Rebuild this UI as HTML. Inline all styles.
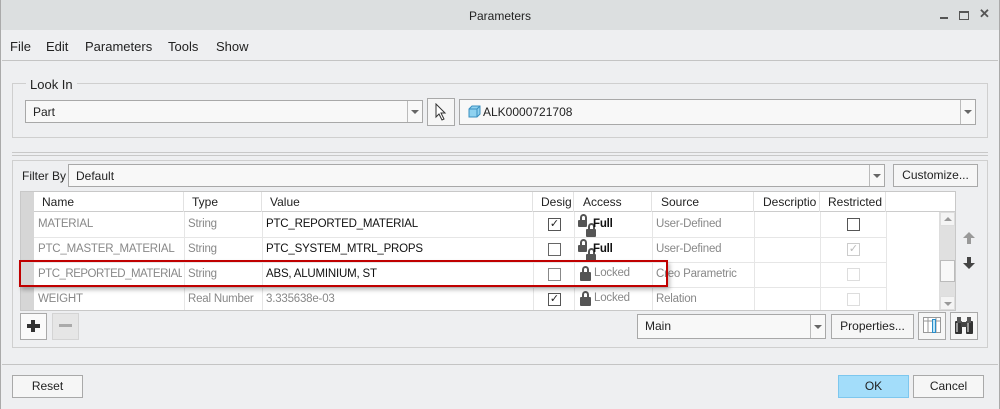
<!DOCTYPE html>
<html><head><meta charset="utf-8"><style>
*{box-sizing:border-box;margin:0;padding:0}
body{width:1000px;height:409px;background:#eeeff1;font-family:"Liberation Sans",sans-serif;font-size:12px;color:#222;position:relative;overflow:hidden}
.a{position:absolute}
.box{position:absolute;background:#f8f8f8;border:1px solid #a8a8a8}
.btn{position:absolute;background:#f6f6f6;border:1px solid #a9a9a9;text-align:center;line-height:20px}
.arr{position:absolute;width:0;height:0;border-left:4px solid transparent;border-right:4px solid transparent;border-top:4px solid #666}
.cell{position:absolute;white-space:nowrap;overflow:hidden;line-height:24px;padding-left:4px;border-right:1px solid #e2e2e2}
.t{position:absolute;white-space:nowrap;overflow:hidden;font-size:11.5px;letter-spacing:-0.2px}
.cb{position:absolute;width:13px;height:13px;border:1px solid #555;background:#fff}
.lock{position:absolute;width:11px;height:9px;background:#555;border-radius:1px}
.lock:before{content:"";position:absolute;left:2px;top:-6px;width:7px;height:7px;border:2px solid #555;border-bottom:none;border-radius:4px 4px 0 0;box-sizing:border-box}
</style></head><body>
<div class="a" style="left:0;top:0;width:1000px;height:30px;background:#dcdfe0"></div>
<div class="a" style="left:0;top:9px;width:1000px;text-align:center;font-size:12px">Parameters</div>
<div class="a" style="left:940px;top:17px;width:8px;height:2px;background:#555"></div>
<div class="a" style="left:959px;top:11px;width:10px;height:9px;border:1px solid #555;border-top-width:2px"></div>
<div class="a" style="left:979px;top:6px;font-size:13px;color:#555;font-weight:bold">✕</div>
<div class="a" style="left:10px;top:39px;font-size:13px">File</div>
<div class="a" style="left:46px;top:39px;font-size:13px">Edit</div>
<div class="a" style="left:85px;top:39px;font-size:13px">Parameters</div>
<div class="a" style="left:168px;top:39px;font-size:13px">Tools</div>
<div class="a" style="left:216px;top:39px;font-size:13px">Show</div>
<div class="a" style="left:2px;top:60px;width:996px;height:1px;background:#c4c4c4"></div>

<div class="a" style="left:12px;top:83px;width:976px;height:55px;border:1px solid #cfcfcf"></div>
<div class="a" style="left:26px;top:77px;padding:0 4px;background:#eeeff1;font-size:13px">Look In</div>
<div class="box" style="left:25px;top:100px;width:398px;height:23px"></div>
<div class="a" style="left:33px;top:105px">Part</div>
<div class="a" style="left:407px;top:101px;width:1px;height:21px;background:#bbb"></div>
<div class="arr" style="left:411px;top:110px"></div>
<div class="btn" style="left:427px;top:98px;width:28px;height:28px"></div>
<svg class="a" style="left:435px;top:103px" width="12" height="18"><path d="M1 1 L1 14 L4 11 L7 17 L9 16 L6 10 L10 10 Z" fill="#fff" stroke="#333"/></svg>
<div class="box" style="left:459px;top:99px;width:517px;height:26px"></div>
<svg class="a" style="left:468px;top:105px" width="13" height="13"><path d="M1 4 L4 1 L12 1 L12 9 L9 12 L1 12 Z" fill="#8fd2f0" stroke="#3a8fc0"/><path d="M1 4 L9 4 L9 12 M9 4 L12 1" fill="none" stroke="#3a8fc0"/></svg>
<div class="a" style="left:483px;top:105px">ALK0000721708</div>
<div class="a" style="left:960px;top:100px;width:1px;height:24px;background:#bbb"></div>
<div class="arr" style="left:964px;top:110px"></div>

<div class="a" style="left:12px;top:152px;width:976px;height:4px;border-top:1px solid #c8c8c8;border-bottom:1px solid #c8c8c8"></div>
<div class="a" style="left:12px;top:160px;width:976px;height:188px;border:1px solid #cfcfcf"></div>
<div class="a" style="left:22px;top:169px">Filter By</div>
<div class="box" style="left:68px;top:164px;width:817px;height:23px"></div>
<div class="a" style="left:76px;top:169px">Default</div>
<div class="a" style="left:869px;top:165px;width:1px;height:21px;background:#bbb"></div>
<div class="arr" style="left:873px;top:174px"></div>
<div class="btn" style="left:893px;top:164px;width:85px;height:23px;font-size:12px">Customize...</div>

<div class="a" style="left:20px;top:191px;width:936px;height:120px;background:#fff;border:1px solid #c8c8c8"></div>
<div class="a" style="left:21px;top:192px;width:13px;height:118px;background:#d6d6d6"></div>
<div class="a" style="left:34px;top:192px;width:921px;height:20px;background:#fff;border-bottom:1px solid #ccc"></div>
<div style="position:absolute;left:0;top:192px;height:20px;line-height:20px">
<div class="cell" style="left:34px;width:150px;line-height:20px;padding-left:8px">Name</div>
<div class="cell" style="left:184px;width:78px;line-height:20px;padding-left:8px">Type</div>
<div class="cell" style="left:262px;width:271px;line-height:20px;padding-left:8px">Value</div>
<div class="cell" style="left:533px;width:41px;line-height:20px;padding-left:8px">Desig</div>
<div class="cell" style="left:574px;width:78px;line-height:20px;padding-left:9px">Access</div>
<div class="cell" style="left:652px;width:102px;line-height:20px;padding-left:9px">Source</div>
<div class="cell" style="left:754px;width:66px;line-height:20px;padding-left:9px">Descriptio</div>
<div class="cell" style="left:820px;width:66px;line-height:20px;padding-left:8px">Restricted</div>
</div>
<div class="a" style="left:34px;top:237px;width:852px;height:1px;background:#e6e6e6"></div>
<div class="a" style="left:34px;top:262px;width:852px;height:1px;background:#e6e6e6"></div>
<div class="a" style="left:34px;top:287px;width:852px;height:1px;background:#e6e6e6"></div>
<div class="a" style="left:184px;top:212px;width:1px;height:98px;background:#e6e6e6"></div>
<div class="a" style="left:262px;top:212px;width:1px;height:98px;background:#e6e6e6"></div>
<div class="a" style="left:533px;top:212px;width:1px;height:98px;background:#e6e6e6"></div>
<div class="a" style="left:574px;top:212px;width:1px;height:98px;background:#e6e6e6"></div>
<div class="a" style="left:652px;top:212px;width:1px;height:98px;background:#e6e6e6"></div>
<div class="a" style="left:754px;top:212px;width:1px;height:98px;background:#e6e6e6"></div>
<div class="a" style="left:820px;top:212px;width:1px;height:98px;background:#e6e6e6"></div>
<div class="a" style="left:886px;top:212px;width:1px;height:98px;background:#e6e6e6"></div>

<div class="t" style="left:38px;top:218px;color:#888;width:144px">MATERIAL</div>
<div class="t" style="left:188px;top:218px;color:#888">String</div>
<div class="t" style="left:266px;top:218px;color:#111">PTC_REPORTED_MATERIAL</div>
<div class="t" style="left:38px;top:243px;color:#888;width:144px">PTC_MASTER_MATERIAL</div>
<div class="t" style="left:188px;top:243px;color:#888">String</div>
<div class="t" style="left:266px;top:243px;color:#111">PTC_SYSTEM_MTRL_PROPS</div>
<div class="t" style="left:38px;top:268px;color:#888;width:144px;letter-spacing:-0.5px">PTC_REPORTED_MATERIAL</div>
<div class="t" style="left:188px;top:268px;color:#888">String</div>
<div class="t" style="left:266px;top:268px;color:#111">ABS, ALUMINIUM, ST</div>
<div class="t" style="left:38px;top:293px;color:#888">WEIGHT</div>
<div class="t" style="left:188px;top:293px;color:#888">Real Number</div>
<div class="t" style="left:266px;top:293px;color:#888">3.335638e-03</div>

<div class="cb" style="left:548px;top:218px;font-size:11px;line-height:11px;text-align:center">✓</div>
<div class="cb" style="left:548px;top:243px;border-color:#666"></div>
<div class="cb" style="left:548px;top:268px;border-color:#888"></div>
<div class="cb" style="left:548px;top:293px;font-size:11px;line-height:11px;text-align:center">✓</div>

<div class="lock" style="left:578px;top:220px;width:9px;height:7px"></div>
<div class="lock" style="left:586px;top:229px;width:10px;height:8px"></div>
<div class="t" style="left:593px;top:218px;color:#111;font-weight:bold">Full</div>
<div class="lock" style="left:578px;top:245px;width:9px;height:7px"></div>
<div class="lock" style="left:586px;top:254px;width:10px;height:8px"></div>
<div class="t" style="left:593px;top:243px;color:#111;font-weight:bold">Full</div>
<div class="lock" style="left:580px;top:272px"></div>
<div class="t" style="left:594px;top:267px;color:#888">Locked</div>
<div class="lock" style="left:580px;top:297px"></div>
<div class="t" style="left:594px;top:292px;color:#888">Locked</div>

<div class="t" style="left:656px;top:218px;color:#888">User-Defined</div>
<div class="t" style="left:656px;top:243px;color:#888">User-Defined</div>
<div class="t" style="left:656px;top:268px;color:#888">Creo Parametric</div>
<div class="t" style="left:656px;top:293px;color:#888">Relation</div>

<div class="cb" style="left:847px;top:218px;border-color:#555"></div>
<div class="cb" style="left:847px;top:243px;border-color:#ccc;color:#bbb;font-size:11px;line-height:11px;text-align:center">✓</div>
<div class="cb" style="left:847px;top:268px;border-color:#ddd"></div>
<div class="cb" style="left:847px;top:293px;border-color:#ddd"></div>

<div class="a" style="left:939px;top:212px;width:16px;height:98px;background:#e0e0e0;border-left:1px solid #ddd"></div>
<div class="a" style="left:940px;top:212px;width:15px;height:14px;background:#f4f4f4;border:1px solid #ddd"></div>
<div class="a" style="left:944px;top:217px;border-left:4px solid transparent;border-right:4px solid transparent;border-bottom:4px solid #999"></div>
<div class="a" style="left:940px;top:260px;width:15px;height:22px;background:#f8f8f8;border:1px solid #bbb"></div>
<div class="a" style="left:940px;top:296px;width:15px;height:14px;background:#f4f4f4;border:1px solid #ddd"></div>
<div class="a" style="left:944px;top:302px;border-left:4px solid transparent;border-right:4px solid transparent;border-top:4px solid #999"></div>

<div class="a" style="left:19px;top:260px;width:649px;height:27px;border:2px solid #c00000;box-shadow:2px 3px 4px rgba(0,0,0,0.25)"></div>

<svg class="a" style="left:962px;top:231px" width="14" height="14"><path d="M7 1 L13 7 L9 7 L9 13 L5 13 L5 7 L1 7 Z" fill="#999"/></svg>
<svg class="a" style="left:962px;top:256px" width="14" height="14"><path d="M5 1 L9 1 L9 7 L13 7 L7 13 L1 7 L5 7 Z" fill="#444"/></svg>

<div class="btn" style="left:20px;top:313px;width:27px;height:27px;background:#fafafa"></div>
<div class="a" style="left:27px;top:324px;width:13px;height:4px;background:#333"></div>
<div class="a" style="left:31px;top:320px;width:4px;height:12px;background:#333"></div>
<div class="a" style="left:52px;top:313px;width:27px;height:27px;background:#e6e6e6;border:1px solid #d4d4d4"></div>
<div class="a" style="left:59px;top:324px;width:13px;height:3px;background:#aaa"></div>

<div class="box" style="left:637px;top:314px;width:189px;height:25px"></div>
<div class="a" style="left:645px;top:319px">Main</div>
<div class="a" style="left:810px;top:315px;width:1px;height:23px;background:#bbb"></div>
<div class="arr" style="left:814px;top:325px"></div>
<div class="btn" style="left:831px;top:314px;width:83px;height:25px;line-height:23px">Properties...</div>
<div class="btn" style="left:918px;top:312px;width:28px;height:28px"></div>
<svg class="a" style="left:923px;top:317px" width="18" height="16"><rect x="0.5" y="0.5" width="17" height="15" fill="#fff" stroke="#999"/><path d="M0 4 H18 M5 0 V16 M13 0 V16" stroke="#999"/><rect x="9.5" y="2.5" width="3" height="13" fill="#bfe6f8" stroke="#2a8cc8"/></svg>
<div class="btn" style="left:950px;top:312px;width:28px;height:28px"></div>
<svg class="a" style="left:953px;top:317px" width="22" height="18"><rect x="2" y="4" width="7" height="13" rx="1" fill="#333"/><rect x="13" y="4" width="7" height="13" rx="1" fill="#333"/><rect x="4" y="0" width="4" height="6" fill="#555"/><rect x="14" y="0" width="4" height="6" fill="#555"/><rect x="8" y="5" width="6" height="5" fill="#444"/><rect x="3" y="6" width="2" height="9" fill="#999"/><rect x="14" y="6" width="2" height="9" fill="#999"/></svg>

<div class="a" style="left:2px;top:364px;width:996px;height:1px;background:#c4c4c4"></div>
<div class="btn" style="left:12px;top:375px;width:71px;height:23px">Reset</div>
<div class="btn" style="left:838px;top:375px;width:71px;height:23px;background:#a3ddfa;border-color:#7dc7ee">OK</div>
<div class="btn" style="left:913px;top:375px;width:71px;height:23px">Cancel</div>
<div class="a" style="left:0;top:0;width:1px;height:409px;background:#aaa"></div>
<div class="a" style="left:999px;top:0;width:1px;height:409px;background:#aaa"></div>
</body></html>
